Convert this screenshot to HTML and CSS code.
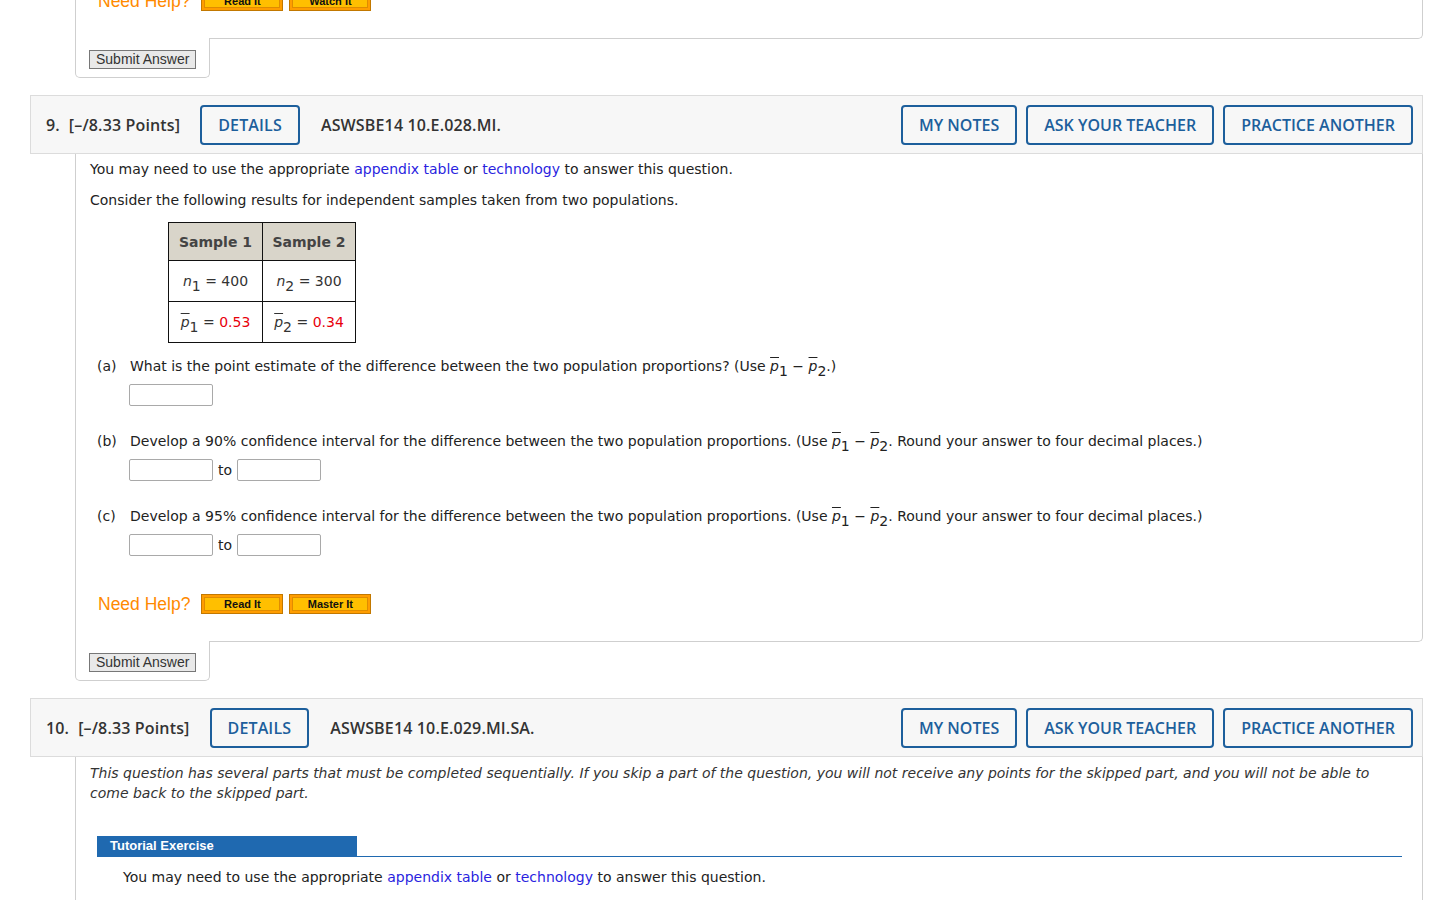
FILE: index.html
```html
<!DOCTYPE html>
<html>
<head>
<meta charset="utf-8">
<link rel="stylesheet" href="styles.css">
</head>
<body>
<div class="page">
  <div class="qbody prev">
    <div class="help">
      <span class="help-label">Need Help?</span>
      <button class="help-btn">Read It</button>
      <button class="help-btn">Watch It</button>
    </div>
  </div>
  <div class="submit-tab"><button class="submit">Submit Answer</button></div>

  <div class="qhead">
    <span class="qnum">9.</span>
    <span class="qpts">[–/8.33 Points]</span>
    <button class="hbtn details">DETAILS</button>
    <span class="qcode">ASWSBE14 10.E.028.MI.</span>
    <span class="spacer"></span>
    <button class="hbtn">MY NOTES</button>
    <button class="hbtn">ASK YOUR TEACHER</button>
    <button class="hbtn">PRACTICE ANOTHER</button>
  </div>
  <div class="qbody">
    <p class="para">You may need to use the appropriate <a class="link">appendix table</a> or <a class="link">technology</a> to answer this question.</p>
    <p class="para">Consider the following results for independent samples taken from two populations.</p>
    <table class="data">
      <tr><th>Sample 1</th><th>Sample 2</th></tr>
      <tr><td><i>n</i><span class="sub">1</span> = 400</td><td><i>n</i><span class="sub">2</span> = 300</td></tr>
      <tr><td><i class="bar">p</i><span class="sub">1</span> = <span class="red">0.53</span></td><td><i class="bar">p</i><span class="sub">2</span> = <span class="red">0.34</span></td></tr>
    </table>

    <div class="part">
      <span class="plabel">(a)</span>
      <div class="pbody">
        <div class="ptext">What is the point estimate of the difference between the two population proportions? (Use <i class="bar">p</i><span class="sub">1</span> − <i class="bar">p</i><span class="sub">2</span>.)</div>
        <div class="answers"><span class="ans"></span></div>
      </div>
    </div>

    <div class="part">
      <span class="plabel">(b)</span>
      <div class="pbody">
        <div class="ptext">Develop a 90% confidence interval for the difference between the two population proportions. (Use <i class="bar">p</i><span class="sub">1</span> − <i class="bar">p</i><span class="sub">2</span>. Round your answer to four decimal places.)</div>
        <div class="answers"><span class="ans"></span><span class="to">to</span><span class="ans"></span></div>
      </div>
    </div>

    <div class="part">
      <span class="plabel">(c)</span>
      <div class="pbody">
        <div class="ptext">Develop a 95% confidence interval for the difference between the two population proportions. (Use <i class="bar">p</i><span class="sub">1</span> − <i class="bar">p</i><span class="sub">2</span>. Round your answer to four decimal places.)</div>
        <div class="answers"><span class="ans"></span><span class="to">to</span><span class="ans"></span></div>
      </div>
    </div>

    <div class="help main-help">
      <span class="help-label">Need Help?</span>
      <button class="help-btn">Read It</button>
      <button class="help-btn">Master It</button>
    </div>
  </div>
  <div class="submit-tab"><button class="submit">Submit Answer</button></div>

  <div class="qhead">
    <span class="qnum">10.</span>
    <span class="qpts">[–/8.33 Points]</span>
    <button class="hbtn details">DETAILS</button>
    <span class="qcode">ASWSBE14 10.E.029.MI.SA.</span>
    <span class="spacer"></span>
    <button class="hbtn">MY NOTES</button>
    <button class="hbtn">ASK YOUR TEACHER</button>
    <button class="hbtn">PRACTICE ANOTHER</button>
  </div>
  <div class="qbody last">
    <p class="note">This question has several parts that must be completed sequentially. If you skip a part of the question, you will not receive any points for the skipped part, and you will not be able to come back to the skipped part.</p>
    <div class="tutorial"><span class="tut-title">Tutorial Exercise</span></div>
    <p class="tut-text">You may need to use the appropriate <a class="link">appendix table</a> or <a class="link">technology</a> to answer this question.</p>
  </div>
</div>
</body>
</html>
```
FILE: styles.css
```css
body {
  margin: 0;
  background: #fff;
  font-family: "DejaVu Sans", Verdana, sans-serif;
  font-size: 14px;
  color: #222;
}

.page {
  display: block;
}

.qbody {
  margin-left: 75px;
  margin-right: 17px;
  border: 1px solid #cfcfcf;
  border-top: none;
  border-radius: 0 0 5px 0;
  padding: 6px 20px 27px 14px;
  background: #fff;
}

.qbody.prev {
  margin-top: -9px;
  padding-top: 0;
}

.qbody.last {
  padding-top: 6px;
  padding-bottom: 40px;
}

.submit-tab {
  margin-left: 75px;
  margin-top: -1px;
  width: 135px;
  height: 40px;
  box-sizing: border-box;
  border: 1px solid #cfcfcf;
  border-top: none;
  border-radius: 0 0 5px 5px;
  background: #fff;
  padding: 12px 0 0 13px;
  margin-bottom: 17px;
}

.submit {
  font-family: "Liberation Sans", Arial, sans-serif;
  font-size: 14px;
  color: #333;
  background: #e9e9e9;
  border: 1px solid #777;
  border-radius: 0;
  height: 19px;
  padding: 0 6px;
  line-height: 17px;
  margin: 0;
}

.help {
  display: flex;
  align-items: center;
  height: 20px;
  margin-left: 8px;
}

.main-help {
  margin-top: 38px;
}

.help-label {
  font-family: "Liberation Sans", Arial, sans-serif;
  font-size: 17.5px;
  color: #ff8a00;
  margin-right: 11px;
}

.help-btn {
  width: 82px;
  height: 20px;
  margin: 0 6px 0 0;
  padding: 0;
  font-family: "Liberation Sans", Arial, sans-serif;
  font-weight: bold;
  font-size: 11px;
  color: #111;
  background: #ffbf00;
  border: 1px solid #c27800;
  box-shadow: inset 0 0 0 2px #ff9d00, inset 0 0 0 3px #e08c00;
  border-radius: 0;
}

.qhead {
  display: flex;
  align-items: center;
  margin-left: 30px;
  margin-right: 17px;
  height: 59px;
  box-sizing: border-box;
  border: 1px solid #dcdcdc;
  background: #f7f7f7;
  padding: 0 9px 0 15px;
  font-family: "Open Sans", sans-serif;
  font-weight: 600;
  font-size: 16px;
  letter-spacing: 0.15px;
  color: #333;
}

.qnum {
  margin-right: 9px;
}

.qpts {
  margin-right: 20px;
}

.qcode {
  margin-left: 21px;
}

.spacer {
  flex: 1;
}

.hbtn {
  height: 40px;
  box-sizing: border-box;
  border: 2px solid #1d5f9c;
  border-radius: 4px;
  background: transparent;
  color: #1d5f9c;
  font-family: "Open Sans", sans-serif;
  font-weight: 600;
  font-size: 16px;
  letter-spacing: 0;
  padding: 0 16px;
  margin-left: 9px;
}

.hbtn.details {
  margin-left: 0;
  letter-spacing: 0.15px;
}

.para {
  margin: 0 0 13px 0;
  line-height: 18px;
}

.link {
  color: #2a1fe0;
  text-decoration: none;
}

.data {
  border-collapse: collapse;
  margin-left: 78px;
  margin-top: 0;
  color: #333;
}

.data th,
.data td {
  border: 1px solid #111;
  text-align: center;
  padding: 0 8px;
  white-space: nowrap;
}

.data th {
  background: #d9d5ca;
  color: #444;
  height: 37px;
  font-weight: bold;
}

.data td {
  height: 40px;
}

.data th:first-child,
.data td:first-child {
  width: 77px;
}

.data th:last-child,
.data td:last-child {
  width: 76px;
}

.sub {
  vertical-align: -5px;
  line-height: 0;
}

.bar {
  text-decoration: overline;
}

.red {
  color: #e8000b;
}

.part {
  display: flex;
  margin-left: 7px;
  margin-top: 14px;
}

.part + .part {
  margin-top: 26px;
}

.plabel {
  width: 33px;
  flex: none;
  line-height: 18px;
}

.ptext {
  line-height: 18px;
}

.answers {
  display: flex;
  align-items: center;
  margin-top: 9px;
}

.ans {
  display: block;
  width: 84px;
  height: 22px;
  box-sizing: border-box;
  border: 1px solid #a9a9a9;
  border-radius: 2px;
  background: #fff;
  margin-left: -1px;
}

.to {
  margin: 0 5px 0 5px;
}

.to + .ans {
  margin-left: 0;
}

.note {
  margin: 0;
  font-style: italic;
  color: #333;
  line-height: 20px;
}

.tutorial {
  margin: 33px 0 0 7px;
  border-bottom: 1px solid #1f69b0;
  height: 20px;
}

.tut-title {
  display: block;
  width: 260px;
  height: 20px;
  box-sizing: border-box;
  background: #1f69b0;
  color: #fff;
  font-family: "Liberation Sans", Arial, sans-serif;
  font-weight: bold;
  font-size: 13px;
  line-height: 20px;
  padding-left: 13px;
}

.tut-text {
  margin: 11px 0 0 33px;
  line-height: 18px;
}
```
